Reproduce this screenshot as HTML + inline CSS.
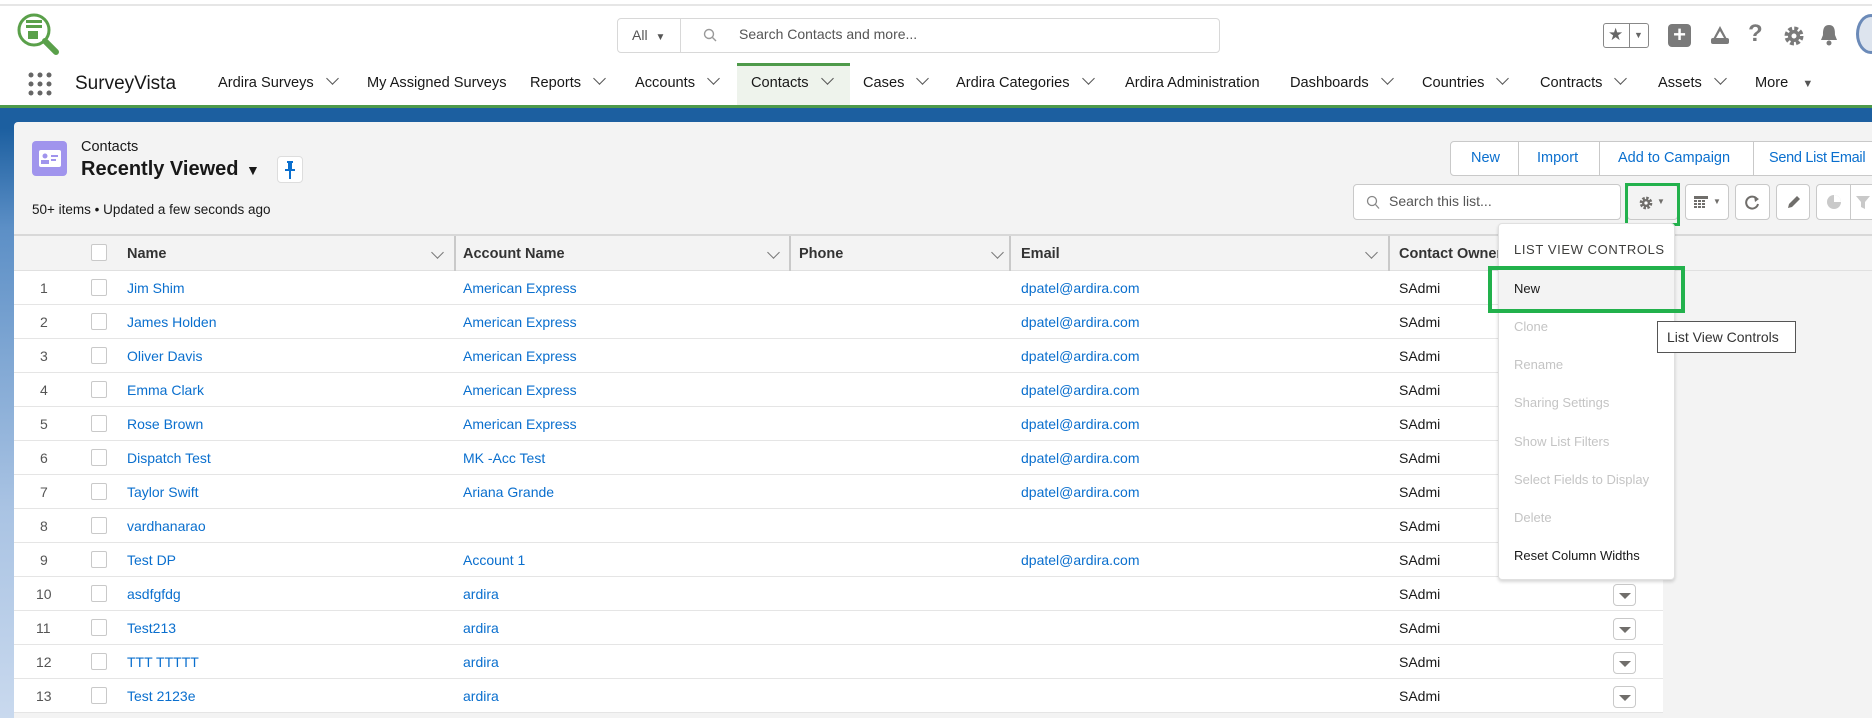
<!DOCTYPE html>
<html><head><meta charset="utf-8"><style>
*{box-sizing:border-box;margin:0;padding:0}
body{width:1872px;height:718px;overflow:hidden;font-family:"Liberation Sans",Arial,sans-serif;background:#fff;position:relative;color:#181818}
.a{position:absolute}
.nav span.t{position:absolute;top:75px;font-size:14.6px;color:#181818;white-space:nowrap}
.chev{display:inline-block;width:9px;height:9px;border-right:1.5px solid #555;border-bottom:1.5px solid #555;transform:rotate(45deg);margin-left:14px;position:relative;top:-4px}
.row{position:absolute;left:14px;width:1649px;height:34px;background:#fff;border-bottom:1px solid #e5e5e5;font-size:14px}
.row span{position:absolute;top:9px;white-space:nowrap}
.lk{color:#0a6fce}
.cb{position:absolute;left:77px;top:8px;width:16px;height:17px;border:1px solid #c9c9c9;border-radius:2px;background:#fff}
.hd{position:absolute;top:10px;font-weight:bold;font-size:14.5px;color:#333}
.hc{position:absolute;top:12px;width:9px;height:9px;border-right:1.5px solid #777;border-bottom:1.5px solid #777;transform:rotate(45deg)}
.dv{position:absolute;top:0;width:2px;height:36px;background:#c9c9c9}
.mi{position:absolute;left:15px;font-size:13px;color:#c4c4c4;white-space:nowrap}
.ib{position:absolute;top:184px;height:36px;border:1px solid #c9c9c9;border-radius:4px;background:#fff}
.rb{position:absolute;left:1613px;width:23px;height:22px;border:1px solid #c9c9c9;border-radius:4px;background:#fff}
.rb:after{content:"";position:absolute;left:5px;top:8px;border-left:6px solid transparent;border-right:6px solid transparent;border-top:6px solid #706e6b}
</style></head><body>
<div class="a" style="left:0;top:0;width:1872px;height:6px;background:#fff;border-bottom:2px solid #e6e6e6"></div>
<svg class="a" style="left:16px;top:12px" width="46" height="46" viewBox="0 0 46 46">
<circle cx="18" cy="18" r="15" fill="#fff" stroke="#5aa04a" stroke-width="3"/>
<rect x="10" y="8" width="16" height="3" fill="#5aa04a"/><rect x="10" y="13" width="16" height="3" fill="#5aa04a"/>
<rect x="12" y="19" width="10" height="8" fill="#5aa04a"/>
<line x1="29" y1="29" x2="40" y2="40" stroke="#5aa04a" stroke-width="6" stroke-linecap="round"/>
</svg>
<div class="a" style="left:617px;top:18px;width:603px;height:35px;border:1px solid #d8d8d8;border-radius:4px"></div>
<div class="a" style="left:617px;top:18px;width:64px;height:35px;border-right:1px solid #d8d8d8;font-size:14px;color:#555;padding:9px 0 0 15px">All <span style="font-size:10px;margin-left:4px">▼</span></div>
<svg class="a" style="left:703px;top:28px" width="14" height="14"><circle cx="6" cy="6" r="4.5" fill="none" stroke="#999" stroke-width="1.4"/><line x1="9.5" y1="9.5" x2="13" y2="13" stroke="#999" stroke-width="1.4"/></svg>
<div class="a" style="left:739px;top:26px;font-size:14px;color:#555">Search Contacts and more...</div>
<div class="a" style="left:1603px;top:23px;width:46px;height:25px;border:1px solid #888;border-radius:3px;font-size:17px;color:#666;padding-left:4px;line-height:22px">★<span style="position:absolute;left:25px;top:0;height:23px;border-left:1px solid #888;font-size:9px;padding-left:4px">▼</span></div>
<div class="a" style="left:1668px;top:24px;width:23px;height:23px;background:#7a7a7a;border-radius:4px;color:#fff;font-size:22px;text-align:center;line-height:22px;font-weight:bold">+</div>
<svg class="a" style="left:1708px;top:23px" width="24" height="24"><path d="M4 18 L12 3 L20 18 Z" fill="#7a7a7a"/><rect x="3" y="15" width="18" height="6" rx="2" fill="#7a7a7a"/><path d="M12 8 L8 15 L16 15 Z" fill="#fff"/></svg>
<div class="a" style="left:1748px;top:20px;font-size:24px;color:#7a7a7a;font-weight:bold">?</div>
<svg class="a" style="left:1783px;top:24px" width="22" height="24" viewBox="0 0 22 24"><circle cx="11" cy="12" r="7" fill="none" stroke="#7a7a7a" stroke-width="5" stroke-dasharray="3.5 2"/><circle cx="11" cy="12" r="6" fill="#7a7a7a"/><circle cx="11" cy="12" r="2.5" fill="#fff"/></svg>
<svg class="a" style="left:1819px;top:23px" width="20" height="24"><path d="M10 2 C4 2 4 8 4 12 L2 17 L18 17 L16 12 C16 8 16 2 10 2 Z" fill="#7a7a7a"/><circle cx="10" cy="20" r="2.5" fill="#7a7a7a"/></svg>
<div class="a" style="left:1856px;top:14px;width:30px;height:40px;border-radius:50%;border:3px solid #6b8ab8;background:#dde4ee"></div>
<div class="nav">
<svg class="a" style="left:28px;top:72px" width="24" height="24"><g fill="#666"><circle cx="3" cy="3" r="2.5"/><circle cx="12" cy="3" r="2.5"/><circle cx="21" cy="3" r="2.5"/><circle cx="3" cy="12" r="2.5"/><circle cx="12" cy="12" r="2.5"/><circle cx="21" cy="12" r="2.5"/><circle cx="3" cy="21" r="2.5"/><circle cx="12" cy="21" r="2.5"/><circle cx="21" cy="21" r="2.5"/></g></svg>
<span class="t" style="left:75px;top:73px;font-size:19px">SurveyVista</span>
<div class="a" style="left:737px;top:63px;width:113px;height:42px;background:#eef3ec;border-top:3px solid #4e9a4a"></div>
<span class="t" style="left:218px">Ardira Surveys<i class="chev"></i></span>
<span class="t" style="left:367px">My Assigned Surveys</span>
<span class="t" style="left:530px">Reports<i class="chev"></i></span>
<span class="t" style="left:635px">Accounts<i class="chev"></i></span>
<span class="t" style="left:751px">Contacts<i class="chev"></i></span>
<span class="t" style="left:863px">Cases<i class="chev"></i></span>
<span class="t" style="left:956px">Ardira Categories<i class="chev"></i></span>
<span class="t" style="left:1125px">Ardira Administration</span>
<span class="t" style="left:1290px">Dashboards<i class="chev"></i></span>
<span class="t" style="left:1422px">Countries<i class="chev"></i></span>
<span class="t" style="left:1540px">Contracts<i class="chev"></i></span>
<span class="t" style="left:1658px">Assets<i class="chev"></i></span>
<span class="t" style="left:1755px">More <span style="font-size:11px;color:#555;margin-left:10px">▼</span></span>
</div>
<div class="a" style="left:0;top:105px;width:1872px;height:3px;background:#4e9a4a"></div>
<div class="a" style="left:0;top:108px;width:1872px;height:610px;background:linear-gradient(180deg,#1c5fa0 0px,#1c5fa0 20px,#5c8fc6 120px,#a9c3e3 400px,#c9d9ee 610px)"></div>
<div class="a" style="left:14px;top:122px;width:1858px;height:596px;background:#f3f3f3;border-radius:4px 0 0 0"></div>
<div class="a" style="left:32px;top:141px;width:35px;height:35px;background:#a094ed;border-radius:4px"></div>
<svg class="a" style="left:39px;top:150px" width="22" height="17"><rect x="0" y="0" width="22" height="17" rx="2" fill="#fff"/><circle cx="6" cy="6" r="2.5" fill="#a094ed"/><rect x="2" y="10" width="8" height="4" fill="#a094ed"/><rect x="12" y="5" width="7" height="2" fill="#a094ed"/><rect x="12" y="9" width="5" height="2" fill="#a094ed"/></svg>
<div class="a" style="left:81px;top:139px;font-size:14.5px">Contacts</div>
<div class="a" style="left:81px;top:158px;font-size:20px;font-weight:bold">Recently Viewed <span style="font-size:14px;margin-left:2px">▼</span></div>
<div class="a" style="left:277px;top:156px;width:26px;height:27px;background:#fff;border:1px solid #ddd;border-radius:4px"></div>
<svg class="a" style="left:284px;top:161px" width="12" height="18"><rect x="3" y="0" width="6" height="2" fill="#0a6fce"/><rect x="4" y="2" width="4" height="6" fill="#0a6fce"/><rect x="1" y="8" width="10" height="2" fill="#0a6fce"/><rect x="5" y="10" width="2" height="8" fill="#0a6fce"/></svg>
<div class="a" style="left:32px;top:202px;font-size:13.5px">50+ items • Updated a few seconds ago</div>
<div class="a" style="left:1450px;top:141px;width:430px;height:35px;background:#fff;border:1px solid #c9c9c9;border-radius:4px;font-size:14.5px;color:#0a6fce">
<span class="a" style="left:20px;top:8px">New</span>
<span class="a" style="left:67px;top:0;height:34px;border-left:1px solid #c9c9c9"></span>
<span class="a" style="left:86px;top:8px">Import</span>
<span class="a" style="left:148px;top:0;height:34px;border-left:1px solid #c9c9c9"></span>
<span class="a" style="left:167px;top:8px">Add to Campaign</span>
<span class="a" style="left:302px;top:0;height:34px;border-left:1px solid #c9c9c9"></span>
<span class="a" style="left:318px;top:8px;letter-spacing:-0.3px">Send List Email</span>
</div>
<div class="a" style="left:1353px;top:184px;width:268px;height:36px;background:#fff;border:1px solid #c9c9c9;border-radius:4px"></div>
<svg class="a" style="left:1366px;top:195px" width="14" height="15"><circle cx="6" cy="6" r="4.5" fill="none" stroke="#888" stroke-width="1.3"/><line x1="9.5" y1="9.5" x2="13" y2="13.5" stroke="#888" stroke-width="1.3"/></svg>
<div class="a" style="left:1389px;top:193px;font-size:14px;color:#555">Search this list...</div>
<div class="ib" style="left:1627px;width:51px;background:#f3f3f3"></div>
<svg class="a" style="left:1638px;top:195px" width="16" height="16" viewBox="0 0 22 24"><circle cx="11" cy="12" r="7" fill="none" stroke="#706e6b" stroke-width="5" stroke-dasharray="3.5 2"/><circle cx="11" cy="12" r="6" fill="#706e6b"/><circle cx="11" cy="12" r="2.5" fill="#fff"/></svg>
<div class="a" style="left:1657px;top:197px;font-size:8px;color:#706e6b">▼</div>
<div class="a" style="left:1625px;top:183px;width:55px;height:43px;border:3px solid #22b14c"></div>
<div class="ib" style="left:1685px;width:44px"></div>
<svg class="a" style="left:1694px;top:196px" width="14" height="14"><g fill="#706e6b"><rect x="0" y="0" width="14" height="3"/><rect x="0" y="4" width="3" height="2"/><rect x="4" y="4" width="3" height="2"/><rect x="8" y="4" width="3" height="2"/><rect x="0" y="7" width="3" height="2"/><rect x="4" y="7" width="3" height="2"/><rect x="8" y="7" width="3" height="2"/><rect x="0" y="10" width="3" height="2"/><rect x="4" y="10" width="3" height="2"/><rect x="8" y="10" width="3" height="2"/></g></svg>
<div class="a" style="left:1713px;top:197px;font-size:8px;color:#706e6b">▼</div>
<div class="ib" style="left:1735px;width:35px"></div>
<svg class="a" style="left:1745px;top:194px" width="16" height="16"><path d="M12 5 A6 6 0 1 0 13 10" fill="none" stroke="#706e6b" stroke-width="2"/><path d="M9 2 L14 5 L10 8 Z" fill="#706e6b"/></svg>
<div class="ib" style="left:1776px;width:34px"></div>
<svg class="a" style="left:1786px;top:194px" width="15" height="16"><path d="M2 14 L3 10 L11 2 L14 5 L6 13 Z" fill="#706e6b"/></svg>
<div class="ib" style="left:1816px;width:70px"></div>
<svg class="a" style="left:1826px;top:194px" width="16" height="16"><circle cx="8" cy="8" r="7" fill="#c9c9c9"/><path d="M8 8 L8 1 A7 7 0 0 1 15 8 Z" fill="#fff"/></svg>
<div class="a" style="left:1850px;top:184px;height:36px;border-left:1px solid #c9c9c9"></div>
<svg class="a" style="left:1856px;top:196px" width="14" height="14"><path d="M0 0 L14 0 L9 6 L9 13 L5 11 L5 6 Z" fill="#c9c9c9"/></svg>
<div class="a" style="left:14px;top:234px;width:1858px;height:37px;background:#f3f3f3;border-top:2px solid #d8d8d8;border-bottom:1px solid #e0e0e0">
<div class="cb" style="left:77px;top:8px"></div>
<span class="hd" style="left:113px">Name</span><i class="hc" style="left:419px"></i><span class="dv" style="left:440px"></span>
<span class="hd" style="left:449px">Account Name</span><i class="hc" style="left:755px"></i><span class="dv" style="left:775px"></span>
<span class="hd" style="left:785px">Phone</span><i class="hc" style="left:979px"></i><span class="dv" style="left:995px"></span>
<span class="hd" style="left:1007px">Email</span><i class="hc" style="left:1353px"></i><span class="dv" style="left:1374px"></span>
<span class="hd" style="left:1385px">Contact Owner</span>
</div>
<div class="row" style="top:271px"><span style="left:26px;color:#555">1</span><div class="cb"></div><span class="lk" style="left:113px">Jim Shim</span><span class="lk" style="left:449px">American Express</span><span class="lk" style="left:1007px">dpatel@ardira.com</span><span style="left:1385px">SAdmi</span></div>
<div class="row" style="top:305px"><span style="left:26px;color:#555">2</span><div class="cb"></div><span class="lk" style="left:113px">James Holden</span><span class="lk" style="left:449px">American Express</span><span class="lk" style="left:1007px">dpatel@ardira.com</span><span style="left:1385px">SAdmi</span></div>
<div class="row" style="top:339px"><span style="left:26px;color:#555">3</span><div class="cb"></div><span class="lk" style="left:113px">Oliver Davis</span><span class="lk" style="left:449px">American Express</span><span class="lk" style="left:1007px">dpatel@ardira.com</span><span style="left:1385px">SAdmi</span></div>
<div class="row" style="top:373px"><span style="left:26px;color:#555">4</span><div class="cb"></div><span class="lk" style="left:113px">Emma Clark</span><span class="lk" style="left:449px">American Express</span><span class="lk" style="left:1007px">dpatel@ardira.com</span><span style="left:1385px">SAdmi</span></div>
<div class="row" style="top:407px"><span style="left:26px;color:#555">5</span><div class="cb"></div><span class="lk" style="left:113px">Rose Brown</span><span class="lk" style="left:449px">American Express</span><span class="lk" style="left:1007px">dpatel@ardira.com</span><span style="left:1385px">SAdmi</span></div>
<div class="row" style="top:441px"><span style="left:26px;color:#555">6</span><div class="cb"></div><span class="lk" style="left:113px">Dispatch Test</span><span class="lk" style="left:449px">MK -Acc Test</span><span class="lk" style="left:1007px">dpatel@ardira.com</span><span style="left:1385px">SAdmi</span></div>
<div class="row" style="top:475px"><span style="left:26px;color:#555">7</span><div class="cb"></div><span class="lk" style="left:113px">Taylor Swift</span><span class="lk" style="left:449px">Ariana Grande</span><span class="lk" style="left:1007px">dpatel@ardira.com</span><span style="left:1385px">SAdmi</span></div>
<div class="row" style="top:509px"><span style="left:26px;color:#555">8</span><div class="cb"></div><span class="lk" style="left:113px">vardhanarao</span><span style="left:1385px">SAdmi</span></div>
<div class="row" style="top:543px"><span style="left:26px;color:#555">9</span><div class="cb"></div><span class="lk" style="left:113px">Test DP</span><span class="lk" style="left:449px">Account 1</span><span class="lk" style="left:1007px">dpatel@ardira.com</span><span style="left:1385px">SAdmi</span></div>
<div class="row" style="top:577px"><span style="left:22px;color:#555">10</span><div class="cb"></div><span class="lk" style="left:113px">asdfgfdg</span><span class="lk" style="left:449px">ardira</span><span style="left:1385px">SAdmi</span></div>
<div class="row" style="top:611px"><span style="left:22px;color:#555">11</span><div class="cb"></div><span class="lk" style="left:113px">Test213</span><span class="lk" style="left:449px">ardira</span><span style="left:1385px">SAdmi</span></div>
<div class="row" style="top:645px"><span style="left:22px;color:#555">12</span><div class="cb"></div><span class="lk" style="left:113px">TTT TTTTT</span><span class="lk" style="left:449px">ardira</span><span style="left:1385px">SAdmi</span></div>
<div class="row" style="top:679px"><span style="left:22px;color:#555">13</span><div class="cb"></div><span class="lk" style="left:113px">Test 2123e</span><span class="lk" style="left:449px">ardira</span><span style="left:1385px">SAdmi</span></div>
<div class="rb" style="top:584px"></div><div class="rb" style="top:618px"></div><div class="rb" style="top:652px"></div><div class="rb" style="top:686px"></div>
<div class="a" style="left:1498px;top:223px;width:177px;height:357px;background:#fff;border:1px solid #e0e0e0;border-radius:4px;box-shadow:0 2px 3px rgba(0,0,0,.16)">
<div class="mi" style="top:18px;color:#3e3e3c;letter-spacing:0.6px;font-size:13px">LIST VIEW CONTROLS</div>
<div class="a" style="left:0;top:45px;width:175px;height:42px;background:#f3f3f3"></div>
<div class="mi" style="top:57px;color:#181818">New</div>
<div class="mi" style="top:95px">Clone</div>
<div class="mi" style="top:133px">Rename</div>
<div class="mi" style="top:171px">Sharing Settings</div>
<div class="mi" style="top:210px">Show List Filters</div>
<div class="mi" style="top:248px">Select Fields to Display</div>
<div class="mi" style="top:286px">Delete</div>
<div class="mi" style="top:324px;color:#181818">Reset Column Widths</div>
</div>
<div class="a" style="left:1488px;top:266px;width:197px;height:47px;border:4px solid #22b14c"></div>
<div class="a" style="left:1657px;top:321px;width:139px;height:32px;background:#fff;border:1px solid #555;font-size:14px;color:#333;padding:7px 0 0 9px;white-space:nowrap">List View Controls</div>
</body></html>
